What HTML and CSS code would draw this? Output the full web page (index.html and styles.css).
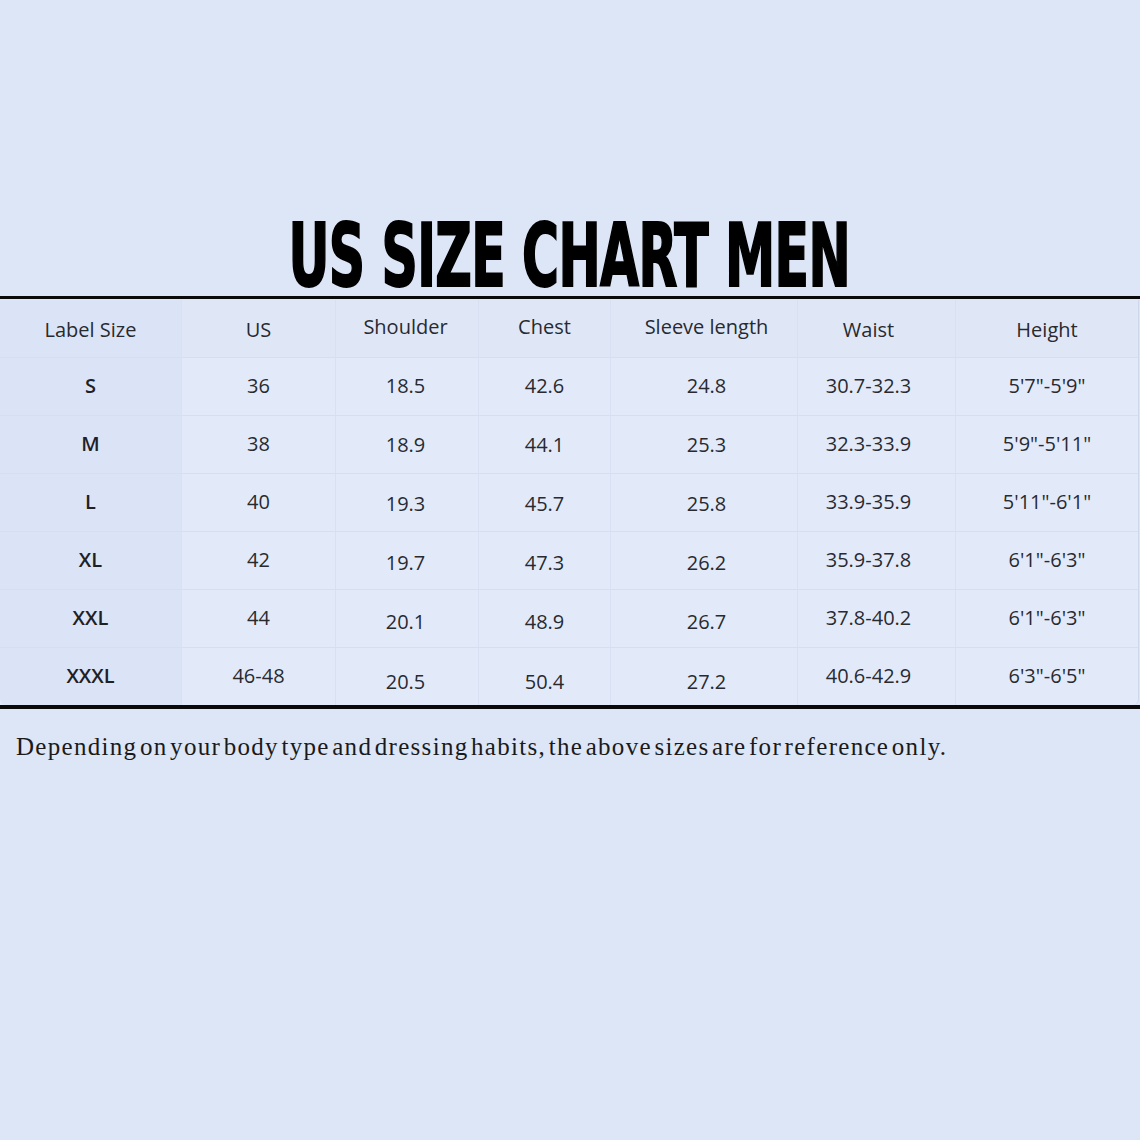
FILE: index.html
```html
<!DOCTYPE html>
<html>
<head>
<meta charset="utf-8">
<link rel="stylesheet" href="styles.css">
</head>
<body>
<div class="page">
  <h1 class="title"><span class="title-text">US SIZE CHART MEN</span></h1>
  <div class="rule rule-top"></div>
  <div class="chart">
    <div class="cell head c1">Label Size</div>
    <div class="cell head">US</div>
    <div class="cell head up sh">Shoulder</div>
    <div class="cell head up">Chest</div>
    <div class="cell head up sl">Sleeve length</div>
    <div class="cell head waist">Waist</div>
    <div class="cell head last">Height</div>

    <div class="cell lab">S</div><div class="cell">36</div><div class="cell o1 sh">18.5</div><div class="cell o1">42.6</div><div class="cell o1 sl">24.8</div><div class="cell waist">30.7-32.3</div><div class="cell last">5'7"-5'9"</div>
    <div class="cell lab">M</div><div class="cell">38</div><div class="cell o2 sh">18.9</div><div class="cell o2">44.1</div><div class="cell o2 sl">25.3</div><div class="cell waist">32.3-33.9</div><div class="cell last">5'9"-5'11"</div>
    <div class="cell lab">L</div><div class="cell">40</div><div class="cell o3 sh">19.3</div><div class="cell o3">45.7</div><div class="cell o3 sl">25.8</div><div class="cell waist">33.9-35.9</div><div class="cell last">5'11"-6'1"</div>
    <div class="cell lab">XL</div><div class="cell">42</div><div class="cell o4 sh">19.7</div><div class="cell o4">47.3</div><div class="cell o4 sl">26.2</div><div class="cell waist">35.9-37.8</div><div class="cell last">6'1"-6'3"</div>
    <div class="cell lab">XXL</div><div class="cell">44</div><div class="cell o5 sh">20.1</div><div class="cell o5">48.9</div><div class="cell o5 sl">26.7</div><div class="cell waist">37.8-40.2</div><div class="cell last">6'1"-6'3"</div>
    <div class="cell lab bl">XXXL</div><div class="cell">46-48</div><div class="cell o6 sh">20.5</div><div class="cell o6">50.4</div><div class="cell o6 sl">27.2</div><div class="cell waist">40.6-42.9</div><div class="cell last br">6'3"-6'5"</div>
  </div>
  <div class="rule rule-bottom"></div>
  <p class="note">Depending on your body type and dressing habits, the above sizes are for reference only.</p>
</div>
</body>
</html>
```
FILE: styles.css
```css
html, body {
  margin: 0;
  padding: 0;
  background: #dde6f7;
}
.page {
  width: 1140px;
  height: 1140px;
  padding-top: 211px;
  box-sizing: border-box;
}
.title {
  margin: 0;
  height: 85px;
  text-align: center;
  line-height: 90px;
  font-family: "Liberation Sans Narrow", "DejaVu Sans Condensed", sans-serif;
  font-weight: 700;
  font-size: 87px;
  color: #000;
}
.title-text {
  display: inline-block;
  transform: translateX(-1px) scaleX(0.645);
  -webkit-text-stroke: 2px #000;
  letter-spacing: -1px;
}
.rule {
  background: #0a0a0a;
  width: 1140px;
}
.rule-top { height: 3px; }
.rule-bottom { height: 4px; }
.chart {
  width: 1138px;
  margin-top: 1px;
  display: grid;
  grid-template-columns: 181px 154px 143px 132px 187px 158px 183px;
  grid-template-rows: 57px repeat(6, 58px);
  background: #e2eafa;
  border-right: 1px solid #cfd8ea;
  border-bottom-right-radius: 6px;
  font-family: "Open Sans", "Noto Sans", sans-serif;
  font-size: 20px;
  color: #282a30;
}
.cell {
  display: flex;
  align-items: center;
  justify-content: center;
  border-top: 1px solid #d6def0;
  border-left: 1px solid #d8e0f1;
  padding-bottom: 2px;
  box-sizing: border-box;
}
.head {
  background: #dfe7f7;
  border-top: none;
  padding-bottom: 0;
  padding-top: 1px;
}
.head.up { padding-top: 0; padding-bottom: 5px; }
.waist { padding-right: 16px; }
.sh { padding-right: 3px; }
.sl { padding-left: 5px; }
.c1 { background: #dbe4f6; border-left: none; }
.lab {
  background: #dbe4f6;
  font-weight: 600;
  border-left: none;
  color: #1e2026;
}
.o1 { padding-bottom: 3px; }
.o2 { padding-bottom: 1px; }
.o3 { padding-bottom: 0; padding-top: 1px; }
.o4 { padding-bottom: 0; padding-top: 3px; }
.o5 { padding-bottom: 0; padding-top: 5px; }
.o6 { padding-bottom: 0; padding-top: 9px; }
.bl { border-bottom-left-radius: 6px; }
.br { border-bottom-right-radius: 6px; }
.note {
  margin: 23px 0 0 16px;
  font-family: "Liberation Serif", "DejaVu Serif", serif;
  font-size: 25px;
  line-height: 30px;
  color: #1a1a1a;
  word-spacing: -5px;
  letter-spacing: 1.3px;
}
```
